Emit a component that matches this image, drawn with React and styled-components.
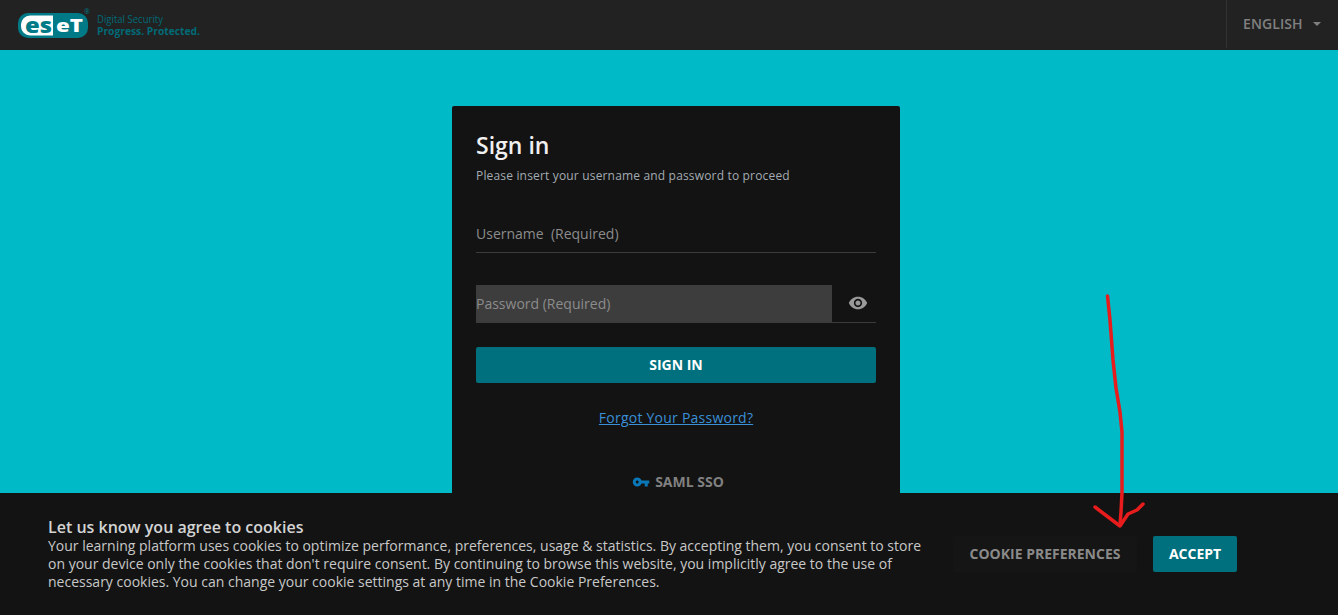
import React from "react";
import styled, { createGlobalStyle } from "styled-components";

const Global = createGlobalStyle`
  html, body { margin: 0; padding: 0; height: 100%; overflow: hidden; }
  body { font-family: "Open Sans", "Liberation Sans", sans-serif; background: #00bac8; }
  #root { height: 100%; }
  * { box-sizing: border-box; }
`;

const Page = styled.div`
  position: relative;
  width: 100%;
  height: 615px;
  overflow: hidden;
  display: flex;
  flex-direction: column;
  background: #00bac8;
`;

const Header = styled.header`
  flex: none;
  height: 50px;
  background: #222222;
  display: flex;
  align-items: stretch;
  justify-content: space-between;
  padding-left: 18px;
`;

const Brand = styled.div`
  display: flex;
  align-items: flex-start;
  padding-top: 8px;
`;

const Language = styled.div`
  width: 112px;
  border-left: 1px solid #333333;
  display: flex;
  align-items: center;
  gap: 10px;
  height: 48px;
  padding: 0 0 2px 16px;
  color: #808080;
  font-size: 14px;
  font-weight: 600;
  letter-spacing: 0.1px;
`;

const Caret = styled.span`
  width: 0;
  height: 0;
  margin-top: 2px;
  border-left: 4px solid transparent;
  border-right: 4px solid transparent;
  border-top: 4px solid #808080;
`;

const Main = styled.main`
  flex: 1;
  display: flex;
  justify-content: center;
  padding: 56px 0 0 14px;
`;

const Card = styled.section`
  width: 448px;
  height: 440px;
  background: #131313;
  border-radius: 2px;
  padding: 24px;
  display: flex;
  flex-direction: column;
`;

const Title = styled.h1`
  margin: 0;
  font-size: 23px;
  line-height: 30px;
  font-weight: 600;
  color: #f0f0f0;
`;

const Subtitle = styled.p`
  margin: 8px 0 0;
  font-size: 12px;
  letter-spacing: 0.17px;
  line-height: 16px;
  color: #a3abb2;
`;

const UsernameField = styled.div`
  margin-top: 30px;
  height: 39px;
  border-bottom: 1px solid #3c3c3c;
  display: flex;
  align-items: center;
  color: #8c8c8c;
  font-size: 14px;
  white-space: pre;
`;

const PasswordField = styled.div`
  margin-top: 32px;
  height: 38px;
  border-bottom: 1px solid #3c3c3c;
  display: flex;
  align-items: stretch;
`;

const PasswordInput = styled.div`
  width: 356px;
  background: #3d3d3d;
  color: #8c8c8c;
  font-size: 14px;
  display: flex;
  align-items: center;
`;

const EyeSlot = styled.div`
  flex: 1;
  display: flex;
  align-items: center;
  justify-content: center;
  padding: 0 0 1px 8px;
  color: #9a9a9a;
`;

const SignInButton = styled.button`
  margin-top: 24px;
  height: 36px;
  width: 100%;
  border: 0;
  padding: 0 0 2px;
  border-radius: 2px;
  background: #00707e;
  color: #ffffff;
  font-family: inherit;
  font-size: 14px;
  font-weight: 700;
`;

const ForgotLink = styled.a`
  margin-top: 25px;
  align-self: center;
  font-size: 14px;
  letter-spacing: 0.24px;
  line-height: 20px;
  color: #3a8fd6;
  text-decoration: underline;
`;

const Saml = styled.div`
  margin-top: 44px;
  padding-left: 4px;
  display: flex;
  justify-content: center;
  align-items: center;
  gap: 5px;
  color: #808080;
  font-size: 14px;
  font-weight: 700;
  line-height: 20px;
`;

const CookieBanner = styled.aside`
  position: absolute;
  left: 0;
  right: 0;
  bottom: 0;
  height: 122px;
  background: #131313;
  display: flex;
  align-items: flex-start;
  padding: 24px 101px 0 48px;
  justify-content: space-between;
`;

const CookieText = styled.div`
  width: 880px;
  color: #c8c8c8;
  font-size: 14px;
  line-height: 18px;
`;

const CookieTitle = styled.div`
  font-size: 16px;
  font-weight: 600;
  line-height: 20px;
  color: #d4d4d4;
`;

const CookieActions = styled.div`
  display: flex;
  gap: 16px;
  margin-top: 19px;
`;

const BannerButton = styled.button`
  height: 36px;
  border: 0;
  padding: 0 0 2px;
  border-radius: 2px;
  font-family: inherit;
  font-size: 14px;
  font-weight: 700;
  width: ${(p) => (p.$primary ? "84px" : "184px")};
  background: ${(p) => (p.$primary ? "#00707e" : "#151515")};
  color: ${(p) => (p.$primary ? "#ffffff" : "#8a8a8a")};
`;

const ArrowOverlay = styled.svg`
  position: absolute;
  inset: 0;
  pointer-events: none;
`;

const Logo = () => (
  <svg width="186" height="32" viewBox="0 0 186 32" aria-label="ESET">
    <rect x="0" y="5" width="70" height="25" rx="10" fill="#007a87" />
    <path d="M12 7.5 H35 V27.5 H12 A9 9 0 0 1 3 18.5 V16.5 A9 9 0 0 1 12 7.5 Z" fill="#ffffff" />
    <text x="7" y="25" fontFamily="'Open Sans', sans-serif" fontWeight="800" fontSize="21" fill="#007a87" textLength="27" lengthAdjust="spacingAndGlyphs">es</text>
    <text x="38" y="24" fontFamily="'Open Sans', sans-serif" fontWeight="800" fontSize="18" fill="#ffffff" textLength="27" lengthAdjust="spacingAndGlyphs">eT</text>
    <text x="66" y="6" fontFamily="'Open Sans', sans-serif" fontSize="7" fill="#007a87">®</text>
    <text x="79" y="15" fontFamily="'Open Sans', sans-serif" fontSize="10" fill="#006a77" textLength="66" lengthAdjust="spacingAndGlyphs">Digital Security</text>
    <text x="79" y="27" fontFamily="'Open Sans', sans-serif" fontWeight="700" fontSize="10.5" fill="#006a77" textLength="103" lengthAdjust="spacingAndGlyphs">Progress. Protected.</text>
  </svg>
);

const Eye = () => (
  <svg width="20" height="20" viewBox="0 0 24 24" fill="currentColor">
    <path d="M12 4.5C7 4.5 2.73 7.61 1 12c1.73 4.39 6 7.5 11 7.5s9.27-3.11 11-7.5c-1.73-4.39-6-7.5-11-7.5zM12 17c-2.76 0-5-2.24-5-5s2.24-5 5-5 5 2.24 5 5-2.24 5-5 5zm0-8c-1.66 0-3 1.34-3 3s1.34 3 3 3 3-1.34 3-3-1.34-3-3-3z" />
  </svg>
);

const Key = () => (
  <svg width="18" height="18" viewBox="0 0 24 24" fill="#0a78b8">
    <path d="M12.65 10C11.83 7.67 9.61 6 7 6c-3.31 0-6 2.69-6 6s2.69 6 6 6c2.61 0 4.83-1.67 5.65-4H17v4h4v-4h2v-4H12.65zM7 14c-1.1 0-2-.9-2-2s.9-2 2-2 2 .9 2 2-.9 2-2 2z" />
  </svg>
);

export default function App() {
  return (
    <Page>
      <Global />
      <Header>
        <Brand><Logo /></Brand>
        <Language>ENGLISH<Caret /></Language>
      </Header>
      <Main>
        <Card>
          <Title>Sign in</Title>
          <Subtitle>Please insert your username and password to proceed</Subtitle>
          <UsernameField>Username  (Required)</UsernameField>
          <PasswordField>
            <PasswordInput>Password (Required)</PasswordInput>
            <EyeSlot><Eye /></EyeSlot>
          </PasswordField>
          <SignInButton>SIGN IN</SignInButton>
          <ForgotLink href="#">Forgot Your Password?</ForgotLink>
          <Saml><Key />SAML SSO</Saml>
        </Card>
      </Main>
      <CookieBanner>
        <CookieText>
          <CookieTitle>Let us know you agree to cookies</CookieTitle>
          Your learning platform uses cookies to optimize performance, preferences, usage &amp; statistics. By accepting them, you consent to store on your device only the cookies that don't require consent. By continuing to browse this website, you implicitly agree to the use of necessary cookies. You can change your cookie settings at any time in the Cookie Preferences.
        </CookieText>
        <CookieActions>
          <BannerButton>COOKIE PREFERENCES</BannerButton>
          <BannerButton $primary>ACCEPT</BannerButton>
        </CookieActions>
      </CookieBanner>
      <ArrowOverlay width="1338" height="615" viewBox="0 0 1338 615" fill="none" stroke="#e81c1c" strokeWidth="3.5" strokeLinecap="round" strokeLinejoin="round">
        <path d="M1107.5 296 L1110 320 L1113 360 L1116 388 L1120 412 L1122 432 L1122 493 L1121 512 L1120 525" />
        <path d="M1095 507 L1120 526 L1128 514 L1137 510 L1143 504" />
      </ArrowOverlay>
    </Page>
  );
}
